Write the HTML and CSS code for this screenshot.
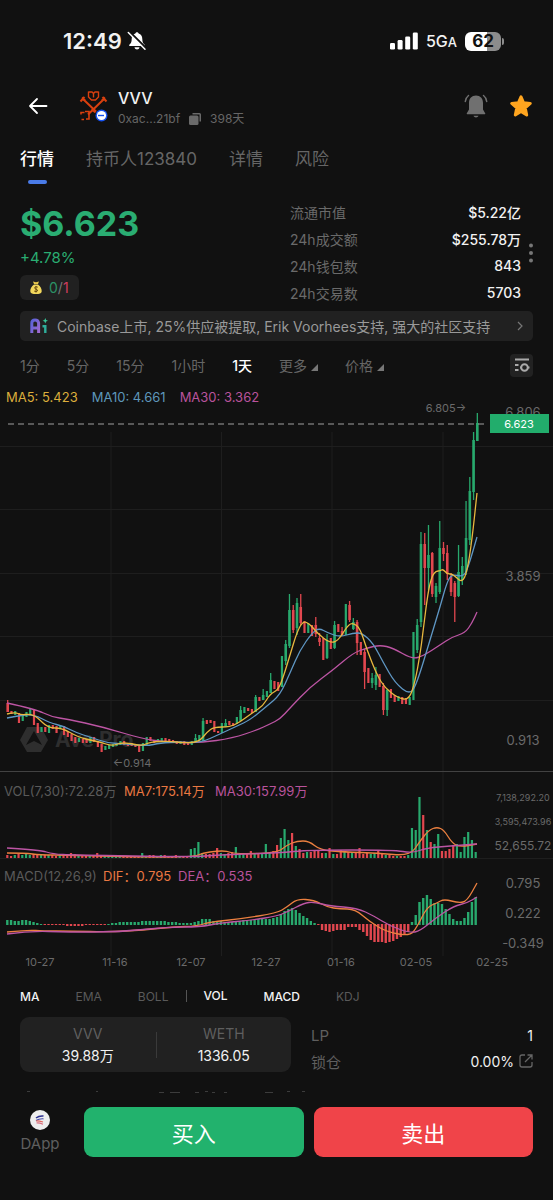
FILE: index.html
```html
<!DOCTYPE html>
<html lang="zh-CN">
  <head>
    <meta charset="UTF-8">
    <meta name="viewport" content="width=device-width, initial-scale=1.0">
    <title>VVV 行情</title>
    <link rel="stylesheet" href="styles.css">
  </head>
  <body>

    <!-- Status Bar -->
    <div class="status-bar">
      <div class="status-left">
        <span class="clock">12:49</span>
        <svg width="20" height="20" viewBox="0 0 20 20">
          <path d="M10 1.2c.9 0 1.5.6 1.6 1.3 2.5.7 3.7 2.8 3.7 5.4 0 3 .8 4.400 2.400 5.900.5.600.2 1.200-.5 1.200H2.800c-.7 0-1-.6-.5-1.200C3.900 12.300 4.700 10.900 4.700 7.900c0-2.600 1.200-4.700 3.700-5.400C8.500 1.800 9.100 1.200 10 1.200z" fill="#fff"/>
          <path d="M7.500 16.300h5c-.3 1.400-1.200 2.200-2.500 2.200s-2.200-.8-2.500-2.200z" fill="#fff"/>
          <path d="M2.500.800 19 17" stroke="#111" stroke-width="2.200"/>
          <path d="M1.300 1.500 18 18.300" stroke="#fff" stroke-width="1.500" stroke-linecap="round"/>
        </svg>
      </div>
      <div class="status-right">
        <svg width="28" height="18" viewBox="0 0 28 18" fill="#fff">
          <rect x="0" y="11" width="5" height="6.500" rx="1.300"/>
          <rect x="7.600" y="8" width="5" height="9.500" rx="1.300"/>
          <rect x="15.200" y="4.500" width="5" height="13" rx="1.300"/>
          <rect x="22.800" y="0.500" width="5" height="17" rx="1.300"/>
        </svg>
        <span class="network">5G<small>A</small></span>
        <span class="battery">62</span>
      </div>
    </div>

    <!-- Token Header -->
    <header class="header">
      <button class="icon-btn" aria-label="返回">
        <svg width="20" height="18" viewBox="0 0 20 18" fill="none" stroke="#fff" stroke-width="1.800" stroke-linecap="round" stroke-linejoin="round">
          <path d="M9 2 2 9l7 7M2 9h16.500"/>
        </svg>
      </button>
      <svg class="token-logo" width="30" height="32" viewBox="0 0 30 32" fill="none" stroke="#d9400f" stroke-width="1.800">
        <path d="M9.500 2H13l1.500 1.500L16 2h3.500M9.500 1.500V7l3 3h4l3-3V1.500M14.500 3.500V7.500" stroke-width="1.400"/>
        <path d="M4 9 17 21.500M25 9 9 24.500" stroke-width="2"/>
        <path d="M1.500 11.500 5.500 7M3 7.500l3 3M27.500 11.500 23.500 7M26 7.500l-3 3" stroke-width="2"/>
        <path d="M2 24.500v-2h3.500M6 21.500h4v7.500H7M2.500 29.500H5M12.500 19.500l4 3" stroke-width="1.600"/>
        <circle cx="22.500" cy="25.500" r="6" fill="#1652f0" stroke="none"/>
        <circle cx="22.500" cy="25.500" r="4.600" fill="#fff" stroke="none"/>
        <path d="M19 25.500h6" stroke="#1652f0" stroke-width="1.400"/>
      </svg>
      <div class="token-info">
        <h1>VVV</h1>
        <p>
          <span>0xac...21bf</span>
          <svg width="12" height="12" viewBox="0 0 12 12" fill="#6a6a6a"><path d="M3.500 0H10.500Q12 0 12 1.500V8.500H10.500V1.500H3.500z"/><rect x="0" y="2.500" width="9.500" height="9.500" rx="1.500"/></svg>
          <span>398天</span>
        </p>
      </div>
      <button class="icon-btn" aria-label="提醒">
        <svg width="24" height="24" viewBox="0 0 24 24" fill="#707070">
          <path d="M12 1.500C7.800 1.500 5 4.500 5 8.800V15.500L2.700 19.500Q2.500 20.300 3.300 20.300H20.700Q21.500 20.300 21.300 19.500L19 15.500V8.800C19 4.500 16.200 1.500 12 1.500z"/>
          <path d="M9.500 21.800h5c-.5 1.200-1.300 1.700-2.500 1.700s-2-.5-2.500-1.700z"/>
          <path d="M4.500 1.500Q1.800 3.500 1.300 7.500M19.500 1.500Q22.200 3.500 22.700 7.500" fill="none" stroke="#707070" stroke-width="1.500" stroke-linecap="round"/>
        </svg>
      </button>
      <button class="icon-btn" aria-label="收藏">
        <svg width="24" height="24" viewBox="0 0 24 24" fill="#ffa51f" stroke="#ffa51f" stroke-width="3" stroke-linejoin="round">
          <path d="M12 2.800 14.600 8.800 21.300 9.400 16.200 13.800 17.700 21 12 17.500 6.300 21 7.800 13.800 2.700 9.400 9.400 8.800z"/>
        </svg>
      </button>
    </header>

    <nav class="tabs">
      <a href="#" class="active">行情</a>
      <a href="#">持币人123840</a>
      <a href="#">详情</a>
      <a href="#">风险</a>
    </nav>

    <!-- Price Summary -->
    <section class="summary">
      <div class="price-box">
        <div class="price">$6.623</div>
        <div class="change">+4.78%</div>
        <div class="badge">
          <svg width="12" height="13" viewBox="0 0 12 13">
            <path d="M3 .5 6 1.300 9 .5 8 3H4z" fill="#e8c84c"/>
            <path d="M4 3.500h4C10.500 5.500 12 8 11.700 10.500 11.500 12.500 9.500 13 6 13S.5 12.500.3 10.500C0 8 1.500 5.500 4 3.500z" fill="#f2d75c"/>
            <path d="M7.800 6.200Q6 5.200 4.800 6.300 4.300 7.700 6 8.200 8 8.700 7.400 10 6 11.200 4.200 10.100M6 5v6.500" fill="none" stroke="#6b4d12" stroke-width="1"/>
          </svg>
          <span><b class="up">0</b>/<b class="down">1</b></span>
        </div>
      </div>
      <dl class="stats">
        <div><dt>流通市值</dt><dd>$5.22亿</dd></div>
        <div><dt>24h成交额</dt><dd>$255.78万</dd></div>
        <div><dt>24h钱包数</dt><dd>843</dd></div>
        <div><dt>24h交易数</dt><dd>5703</dd></div>
      </dl>
      <button class="icon-btn more-dots" aria-label="更多数据">
        <svg width="4" height="20" viewBox="0 0 4 20" fill="#777"><circle cx="2" cy="2.500" r="2"/><circle cx="2" cy="10" r="2"/><circle cx="2" cy="17.500" r="2"/></svg>
      </button>
    </section>

    <a href="#" class="ai-banner">
      <svg width="18" height="16" viewBox="0 0 18 16" fill="none">
        <defs>
          <linearGradient id="aiFill" x1="0" y1="0" x2="1" y2="1">
            <stop offset="0" stop-color="#5a63d8"/>
            <stop offset="1" stop-color="#a06ad0"/>
          </linearGradient>
        </defs>
        <path d="M1.800 15V5Q1.800 2 5 2T8.600 5V15M1.800 10H8.600" stroke="url(#aiFill)" stroke-width="3"/>
        <path d="M12.500 8.300H15.300V15" stroke="#2fae9b" stroke-width="2.400"/>
        <path d="M15.300 0Q15.500 2.500 18 2.700 15.500 3 15.300 5.400 15 3 12.600 2.700 15 2.500 15.300 0z" fill="#39c79a"/>
      </svg>
      <span>Coinbase上市, 25%供应被提取, Erik Voorhees支持, 强大的社区支持</span>
      <svg width="6" height="10" viewBox="0 0 6 10" fill="none" stroke="#777" stroke-width="1.200"><path d="M1 1l4 4-4 4"/></svg>
    </a>

    <!-- Time Range -->
    <div class="ranges">
      <button>1分</button>
      <button>5分</button>
      <button>15分</button>
      <button>1小时</button>
      <button class="active">1天</button>
      <button class="dropdown">更多</button>
      <button class="dropdown">价格</button>
      <button class="settings" aria-label="图表设置">
        <svg width="16" height="15" viewBox="0 0 16 15" fill="none" stroke="#aaa" stroke-width="2">
          <path d="M1 1.500h14M1 7h3.500M1 12h3.500"/>
          <circle cx="10.500" cy="9.500" r="3.300"/>
          <path d="M6 9.500h1M14 9.500h1.500"/>
        </svg>
      </button>
    </div>

    <!-- Chart -->
    <div class="legend">
      <span class="ma5">MA5: 5.423</span>
      <span class="ma10">MA10: 4.661</span>
      <span class="ma30">MA30: 3.362</span>
    </div>
    <svg class="chart" id="chart" viewBox="0 405 553 567">
      <g class="grid">
        <path d="M111 432V956M221.500 432V956M332 432V956M443 432V956"/>
        <path d="M0 446.500H553M0 509.500H553M0 573.500H553M0 636.500H553M0 700.500H553M0 858.500H553"/>
        <path class="divider" d="M0 771.500H553"/>
      </g>
      <g class="watermark">
        <path d="M27 727H41L48 740 41 752H27L20 740z"/>
        <path d="M34 731 42 745 34 741 26 745z" class="hole"/>
        <text x="55" y="747">Ave Pro</text>
      </g>
      <g id="bars"></g>
      <g id="lines"></g>
      <path class="last-price" d="M8 424H488"/>
      <g class="axis">
        <text x="523" y="417">6.806</text>
        <text x="523" y="581">3.859</text>
        <text x="523" y="745">0.913</text>
        <text x="523" y="801" class="tiny">7,138,292.20</text>
        <text x="523" y="825" class="tiny">3,595,473.96</text>
        <text x="523" y="850" class="small">52,655.72</text>
        <text x="523" y="888">0.795</text>
        <text x="523" y="918">0.222</text>
        <text x="523" y="948">-0.349</text>
        <text x="40" y="966" class="date">10-27</text>
        <text x="115" y="966" class="date">11-16</text>
        <text x="191" y="966" class="date">12-07</text>
        <text x="266" y="966" class="date">12-27</text>
        <text x="341" y="966" class="date">01-16</text>
        <text x="416" y="966" class="date">02-05</text>
        <text x="492" y="966" class="date">02-25</text>
        <text x="446" y="412" class="date">6.805→</text>
        <text x="132" y="767" class="date">←0.914</text>
      </g>
      <rect class="tag" x="490" y="414" width="59" height="19"/>
      <text class="tag-text" x="519" y="428">6.623</text>
      <g class="panel-legend">
        <text x="4" y="796">VOL(7,30):72.28万</text>
        <text x="124" y="796" class="orange">MA7:175.14万</text>
        <text x="215" y="796" class="pink">MA30:157.99万</text>
        <text x="4" y="881">MACD(12,26,9)</text>
        <text x="103" y="881" class="orange">DIF：0.795</text>
        <text x="178" y="881" class="pink">DEA：0.535</text>
      </g>
    </svg>

    <!-- Indicators -->
    <div class="indicators">
      <button class="active">MA</button>
      <button>EMA</button>
      <button>BOLL</button>
      <button class="active split">VOL</button>
      <button class="active">MACD</button>
      <button>KDJ</button>
    </div>

    <!-- Pool -->
    <section class="pool">
      <div class="pool-card">
        <div><span>VVV</span><strong>39.88万</strong></div>
        <div><span>WETH</span><strong>1336.05</strong></div>
      </div>
      <dl class="pool-info">
        <div><dt>LP</dt><dd>1</dd></div>
        <div>
          <dt>锁仓</dt>
          <dd>0.00%
            <svg width="14" height="14" viewBox="0 0 14 14" fill="none" stroke="#666" stroke-width="1.300"><path d="M6 1H3Q1 1 1 3V11Q1 13 3 13H11Q13 13 13 11V8M8.500 1H13V5.500M13 1 6 8"/></svg>
          </dd>
        </div>
      </dl>
    </section>

    <svg class="list-edge" width="320" height="2" viewBox="0 0 320 2" fill="#3c3c3c">
      <path d="M27 0h3v1h-3zM96 0h2v1h-2zM159 1h5v1h-5zM170 1h10v1h-10zM195 1h4v1h-4zM205 0h3v1h-3zM212 1h3v1h-3zM224 1h3v1h-3zM265 1h8v1h-8zM287 0h3v1h-3zM302 0h3v1h-3z"/>
    </svg>

    <!-- Bottom Actions -->
    <footer class="actions">
      <a href="#" class="dapp">
        <svg width="20" height="20" viewBox="0 0 20 20" fill="none">
          <circle cx="10" cy="10" r="10" fill="#eee"/>
          <path d="M6 8Q9 5.500 13.500 6" stroke="#2b2f8f" stroke-width="1.500"/>
          <path d="M6 10.500Q9 8.500 13.500 8.800" stroke="#4549a8" stroke-width="1.200"/>
          <path d="M6 11Q8 10.500 13 12" stroke="#e0655f" stroke-width="1.200"/>
          <path d="M6.500 13Q9 12.500 13 14.300" stroke="#d96f80" stroke-width="1.100"/>
        </svg>
        <span>DApp</span>
      </a>
      <button class="buy">买入</button>
      <button class="sell">卖出</button>
    </footer>

    <script src="chart.js"></script>
  </body>
</html>
```
FILE: styles.css
```css
* {
  box-sizing: border-box;
}
body {
  font-family: 'Inter', 'Noto Sans CJK SC', sans-serif;
  margin: 0;
  background-color: #111;
  color: #f2f2f2;
}
button {
  background: none;
  border: none;
  padding: 0;
  color: inherit;
  font-family: inherit;
  cursor: pointer;
}
a {
  color: inherit;
  text-decoration: none;
}
svg {
  display: block;
  flex: none;
}
h1, p, dl, dd {
  margin: 0;
}

/* Status bar */
.status-bar {
  display: flex;
  justify-content: space-between;
  align-items: center;
  height: 82px;
  padding: 0 49px 0 63px;
}
.status-left {
  display: flex;
  align-items: center;
  gap: 5px;
}
.clock {
  font-size: 22px;
  font-weight: 600;
}
.status-right {
  display: flex;
  align-items: center;
  gap: 8px;
}
.network {
  font-size: 16px;
  font-weight: 500;
}
.network small {
  font-size: 13px;
}
.battery {
  position: relative;
  width: 36px;
  height: 19px;
  margin-right: 3px;
  border-radius: 6px;
  background: linear-gradient(to right, #fff 62%, #8c8c8c 62%);
  color: #111;
  font-size: 17px;
  font-weight: 700;
  line-height: 19px;
  text-align: center;
}
.battery::after {
  content: '';
  position: absolute;
  right: -3px;
  top: 6px;
  width: 2px;
  height: 7px;
  border-radius: 0 2px 2px 0;
  background-color: #8c8c8c;
}

/* Header */
.header {
  display: flex;
  align-items: center;
  height: 48px;
  padding: 0 20px 0 28px;
  gap: 21px;
}
.token-logo {
  margin-left: 10px;
}
.token-info {
  flex: 1;
  margin-left: -12px;
  padding-top: 3px;
}
.token-info h1 {
  font-size: 16px;
  font-weight: 500;
  line-height: 22px;
}
.token-info p {
  display: flex;
  align-items: center;
  gap: 9px;
  font-size: 12px;
  line-height: 20px;
  color: #666;
}
.tabs {
  display: flex;
  gap: 32px;
  padding: 16px 20px 0;
  font-size: 17px;
  line-height: 26px;
  color: #666;
}
.tabs a {
  padding-bottom: 12px;
}
.tabs .active {
  position: relative;
  color: #fff;
  font-weight: 500;
}
.tabs .active::after {
  content: '';
  position: absolute;
  left: 8px;
  bottom: 0;
  width: 19px;
  height: 4px;
  border-radius: 2px;
  background-color: #4a7be8;
}

/* Summary */
.summary {
  position: relative;
  display: flex;
  padding: 14px 32px 0 20px;
}
.price-box {
  flex: 1;
}
.price {
  font-size: 34px;
  font-weight: 700;
  line-height: 52px;
  color: #2aad72;
}
.change {
  font-size: 15px;
  line-height: 16px;
  color: #2aad72;
  margin-bottom: 9px;
}
.badge {
  display: inline-flex;
  align-items: center;
  gap: 7px;
  height: 25px;
  padding: 0 10px;
  border-radius: 6px;
  background-color: #212121;
  font-size: 14px;
  color: #777;
}
.badge b {
  font-weight: 400;
}
.up {
  color: #2b9166;
}
.down {
  color: #d23d5c;
}
.stats {
  width: 231px;
  font-size: 14px;
}
.stats div, .pool-info div {
  display: flex;
  justify-content: space-between;
  align-items: center;
}
.stats div {
  height: 27px;
}
.stats dt {
  color: #6a6a6a;
}
.stats dd {
  font-weight: 500;
}
.more-dots {
  position: absolute;
  right: 20px;
  top: 59px;
}
.ai-banner {
  display: flex;
  align-items: center;
  height: 30px;
  margin: 5px 20px 0;
  padding: 0 10px;
  gap: 9px;
  border-radius: 5px;
  background-color: #212121;
  font-size: 14px;
  color: #999;
}
.ai-banner span {
  flex: 1;
  white-space: nowrap;
}

/* Time ranges */
.ranges {
  display: flex;
  align-items: center;
  height: 48px;
  padding: 0 20px;
  gap: 27px;
  color: #666;
}
.ranges button {
  font-size: 14px;
}
.ranges .active {
  color: #fff;
  font-weight: 500;
}
.dropdown::after {
  content: '';
  display: inline-block;
  margin-left: 4px;
  border-left: 7px solid transparent;
  border-bottom: 7px solid #777;
}
.ranges .settings {
  display: flex;
  align-items: center;
  justify-content: center;
  width: 23px;
  height: 23px;
  margin-left: auto;
  border-radius: 4px;
  background-color: #222;
}

/* Chart */
.legend {
  display: flex;
  gap: 14px;
  padding: 0 6px;
  font-size: 13px;
  line-height: 16px;
}
.ma5 {
  color: #dcae3c;
}
.ma10 {
  color: #5e97ba;
}
.ma30 {
  color: #b9539c;
}
.chart {
  width: 100%;
  height: auto;
  overflow: visible;
}
.grid path {
  fill: none;
  stroke: #1e1e1e;
}
.grid .divider {
  stroke: #424242;
}
.watermark {
  fill: #2e2e2e;
  font-size: 21px;
  font-weight: 700;
}
.watermark .hole {
  fill: #111;
}
.last-price {
  stroke: #a0a0a0;
  stroke-width: 1.2;
  stroke-dasharray: 6 4;
}
.axis {
  fill: #6a6a6a;
  font-size: 13px;
  text-anchor: middle;
}
.axis .tiny {
  font-size: 9px;
}
.axis .small {
  font-size: 12px;
}
.axis .date {
  font-size: 11px;
}
.tag {
  fill: #22ad6c;
}
.tag-text {
  fill: #fff;
  font-size: 11px;
  text-anchor: middle;
}
.panel-legend {
  fill: #5a5a5a;
  font-size: 13px;
}
.panel-legend .orange {
  fill: #ea7842;
}
.panel-legend .pink {
  fill: #b9539c;
}
.bar-up {
  fill: #28a96d;
}
.bar-down {
  fill: #e2474f;
}
.line {
  fill: none;
  stroke-width: 1.3;
  stroke-linejoin: round;
}
.line-yellow {
  stroke: #e8b83f;
}
.line-blue {
  stroke: #5f97c4;
}
.line-pink {
  stroke: #bd55a4;
}
.line-orange {
  stroke: #ec8040;
}

/* Indicators */
.indicators {
  display: flex;
  align-items: center;
  gap: 36px;
  height: 45px;
  padding: 3px 20px 0;
  color: #5a5a5a;
}
.indicators button {
  font-size: 12px;
}
.indicators .active {
  color: #f2f2f2;
  font-weight: 500;
}
.indicators .split {
  margin-left: -18px;
  padding-left: 16px;
  border-left: 1px solid #555;
  line-height: 12px;
}

/* Pool */
.pool {
  display: grid;
  grid-template-columns: 271fr 222fr;
  gap: 20px;
  padding: 0 20px;
}
.pool-card {
  display: grid;
  grid-template-columns: 1fr 1fr;
  align-items: center;
  height: 55px;
  border-radius: 9px;
  background-color: #212121;
  text-align: center;
}
.pool-card div + div {
  border-left: 1px solid #3a3a3a;
  height: 26px;
  display: flex;
  flex-direction: column;
  justify-content: center;
}
.pool-card span, .pool-card strong {
  display: block;
  font-size: 14px;
  line-height: 22px;
  font-weight: 400;
}
.pool-card span {
  color: #5f5f5f;
}
.pool-info {
  padding-top: 5px;
  font-size: 14px;
}
.pool-info div {
  height: 26px;
}
.pool-info dt {
  color: #5f5f5f;
  font-size: 15px;
}
.pool-info dd {
  display: flex;
  align-items: center;
  gap: 5px;
}
.list-edge {
  margin-top: 17px;
}

/* Bottom actions */
.actions {
  display: flex;
  align-items: center;
  gap: 10px;
  padding: 14px 20px 42px;
}
.dapp {
  display: flex;
  flex-direction: column;
  align-items: center;
  gap: 4px;
  width: 40px;
  margin-right: 14px;
  font-size: 15px;
  line-height: 20px;
  color: #5f5f5f;
}
.buy, .sell {
  flex: 1;
  height: 50px;
  border-radius: 9px;
  font-size: 22px;
  color: #fff;
}
.buy {
  background-color: #22b26d;
}
.sell {
  background-color: #f04449;
}
```
FILE: chart.js
```js
// Candles: [direction, high, bodyTop, bodyBottom, low], or [direction, top, bottom] when there is no wick
const candles = [
  ['d', 700, 703, 712, 712], ['d', 711, 714], ['u', 711, 715], ['d', 713, 723], ['u', 715, 721], ['u', 712, 717],
  ['u', 709, 714], ['d', 709, 725], ['d', 723, 733], ['u', 727, 732], ['d', 727, 732], ['u', 725, 733],
  ['d', 725, 729], ['d', 726, 733], ['u', 725, 729], ['d', 726, 735], ['d', 731, 737], ['d', 734, 741],
  ['d', 737, 743], ['u', 738, 742], ['d', 739, 743], ['d', 739, 743], ['u', 737, 743], ['d', 737, 742],
  ['d', 741, 747], ['d', 744, 752], ['u', 746, 750], ['u', 745, 749], ['u', 744, 747], ['u', 743, 746],
  ['u', 741, 745], ['d', 741, 745], ['d', 743, 746], ['d', 743, 746], ['d', 744, 747], ['d', 745, 752],
  ['u', 743, 751], ['u', 737, 746], ['d', 737, 741], ['d', 740, 743], ['u', 739, 742], ['u', 738, 741],
  ['d', 738, 741], ['d', 739, 743], ['d', 740, 743], ['d', 741, 744], ['u', 741, 744], ['d', 741, 745],
  ['d', 742, 745], ['u', 741, 745], ['u', 734, 738, 743, 743], ['u', 735, 742], ['u', 718, 721, 741, 741], ['d', 720, 724],
  ['d', 720, 723], ['d', 721, 732], ['d', 731, 733], ['u', 723, 733], ['u', 719, 723, 727, 727], ['d', 721, 725],
  ['d', 723, 726], ['u', 717, 724], ['u', 706, 710, 721, 721], ['u', 707, 713], ['d', 708, 711], ['d', 709, 713],
  ['u', 695, 697, 712, 712], ['d', 697, 701], ['u', 689, 695, 700, 700], ['u', 691, 697], ['u', 673, 680, 693, 693], ['d', 681, 689],
  ['d', 682, 691], ['u', 656, 687], ['u', 640, 644, 661, 665], ['u', 594, 610, 646, 648], ['d', 605, 610, 630, 633], ['u', 598, 603, 628, 635],
  ['d', 594, 607, 623, 625], ['d', 621, 633], ['u', 623, 633], ['d', 625, 636], ['d', 617, 625, 634, 637], ['d', 633, 638, 642, 646],
  ['d', 638, 660], ['u', 634, 640, 658, 659], ['d', 638, 649], ['u', 621, 625, 648, 649], ['d', 624, 632], ['d', 627, 631, 635, 636],
  ['u', 604, 635], ['d', 601, 605, 620, 622], ['u', 618, 622, 629, 630], ['d', 620, 622, 643, 655], ['d', 642, 655], ['d', 649, 652, 672, 689],
  ['d', 668, 683], ['u', 673, 678, 683, 688], ['u', 667, 675, 685, 690], ['d', 674, 687], ['d', 683, 686, 710, 715], ['u', 689, 690, 710, 716],
  ['d', 689, 698], ['d', 695, 702], ['u', 696, 701], ['d', 697, 704], ['d', 698, 704], ['u', 697, 705],
  ['u', 632, 700], ['u', 619, 625, 650, 653], ['u', 532, 544, 622, 627], ['d', 533, 544, 568, 605], ['u', 525, 555, 568, 590], ['d', 552, 553, 594, 597],
  ['u', 583, 586, 597, 603], ['u', 521, 548, 592, 594], ['d', 542, 548, 554, 561], ['d', 545, 553, 574, 580], ['d', 573, 577, 592, 596], ['d', 581, 583, 597, 622],
  ['u', 545, 572, 596, 597], ['u', 557, 566, 580, 585], ['u', 501, 538, 572, 575], ['u', 477, 491, 540, 545], ['u', 432, 440, 492, 500], ['u', 413, 423, 441, 441]
];

// Bar heights under the candles, one per day
const volumes = [
  3, 2, 3, 4, 3, 4, 3, 4, 3, 3, 3, 3, 3, 2, 3, 3, 3, 5, 4, 3, 3, 3, 3, 3, 5, 3, 3, 3, 2, 2, 2,
  2, 2, 2, 2, 2, 5, 2, 3, 3, 2, 3, 3, 2, 2, 3, 2, 2, 2, 9, 10, 16, 5, 4, 4, 5, 10, 5, 4, 5,
  6, 11, 4, 4, 4, 7, 4, 5, 4, 14, 6, 7, 13, 20, 29, 18, 25, 12, 9, 5, 6, 6, 7, 7, 5, 5, 10, 4,
  4, 8, 6, 6, 5, 5, 10, 4, 5, 4, 5, 8, 4, 3, 3, 2, 2, 2, 2, 3, 30, 28, 61, 43, 28, 16, 14,
  24, 7, 7, 9, 13, 14, 6, 21, 26, 18, 6
];

const macd = [
  5, 5, 4, 4, 5, 5, 4, 3, 2, 1, -1, -1, -1, -1, -1, -1, -2, -2, -2, -2, -2, -1, -1, -1, -1, -1, -1, 1,
  2, 2, 3, 3, 3, 3, 3, 3, 4, 4, 4, 4, 4, 4, 4, 3, 3, 3, 2, 2, 2, 2, 3, 4, 6, 6, 6, 4, 4, 4, 3, 3,
  3, 4, 4, 5, 5, 5, 5, 6, 6, 6, 6, 7, 8, 11, 14, 16, 17, 15, 12, 9, 7, 4, 2, -1, -6, -7, -8, -7, -6, -6,
  -6, -3, -3, -3, -6, -8, -12, -16, -18, -18, -18, -19, -18, -17, -15, -13, -11, -8, 3, 10, 23, 27,
  30, 26, 22, 22, 21, 16, 11, 6, 4, 4, 7, 13, 23, 28
];

const lines = [
  ['pink', '7,703 35,709 52,717 67,719 103,727 143,739 167,742 200,743 233,738 257,730 270,724 280,719 290,708 310,687 333,670 353,653 367,648 380,645 393,648 412,659 423,656 440,645 452,637 465,633 472,623 477,612'],
  ['blue', '7,718 17,716 33,714 50,723 63,726 77,733 90,737 107,743 127,744 147,746 160,743 180,742 200,743 220,734 237,726 250,720 267,706 280,695 290,673 300,650 312,633 319,628 328,633 340,637 353,633 362,633 373,643 383,662 395,683 410,695 417,683 430,640 440,607 447,582 452,574 463,577 468,568 477,537'],
  ['yellow', '7,714 15,712 21,715 30,714 37,717 48,728 62,728 78,737 90,740 100,742 112,746 120,743 128,743 142,746 150,742 170,741 183,743 199,742 207,732 214,727 230,727 240,722 252,713 263,706 270,694 278,690 283,678 290,655 297,632 303,621 310,624 318,634 330,643 338,641 348,625 353,623 360,628 367,650 377,675 385,688 398,698 409,700 415,682 420,655 423,632 428,592 432,576 436,571 440,571 443,569 447,574 453,574 462,583 467,572 472,540 477,493'],
  ['orange', '7,853 25,853 40,855 67,855 133,857 193,857 203,853 217,851 227,851 235,854 277,853 287,845 297,841 309,841 320,850 344,852 377,853 410,856 420,841 429,830 437,827 444,830 452,843 460,847 477,844'],
  ['pink', '7,848 40,850 53,854 73,855 193,857 217,855 277,853 310,850 394,850 412,853 427,848 450,846 477,844'],
  ['orange', '7,932 28,930 43,931 70,931 110,932 143,930 173,927 197,926 210,922 240,919 277,913 287,907 297,899 314,900 327,907 340,909 355,909 370,922 387,932 410,936 417,927 427,907 437,903 444,899 459,903 467,901 477,883'],
  ['pink', '7,934 27,931 70,932 120,932 167,927 200,927 220,923 253,920 277,916 287,912 304,903 314,902 330,906 357,908 374,916 390,926 410,933 420,931 437,917 454,906 467,903 477,897']
];

const svgNS = 'http://www.w3.org/2000/svg';
const bars = document.getElementById('bars');
const lineGroup = document.getElementById('lines');

function addBar(x, top, bottom, width, up) {
  const rect = document.createElementNS(svgNS, 'rect');
  rect.setAttribute('x', x - width / 2);
  rect.setAttribute('y', top);
  rect.setAttribute('width', width);
  rect.setAttribute('height', Math.max(bottom - top, 1));
  rect.setAttribute('class', up ? 'bar-up' : 'bar-down');
  bars.appendChild(rect);
}

// Curve through the midpoints so the averages look smooth
function smoothPath(text) {
  const pts = text.split(' ').map(p => p.split(',').map(Number));
  let d = `M${pts[0]}`;
  for (let i = 1; i < pts.length - 1; i++) {
    const midX = (pts[i][0] + pts[i + 1][0]) / 2;
    const midY = (pts[i][1] + pts[i + 1][1]) / 2;
    d += `Q${pts[i]} ${midX},${midY}`;
  }
  return d + `L${pts[pts.length - 1]}`;
}

candles.forEach((c, i) => {
  const x = 7.7 + i * 3.757;
  const up = c[0] === 'u';
  if (c.length === 3) {
    addBar(x, c[1], c[2], 2.2, up);
  } else {
    addBar(x, c[1], c[4], 1.3, up);
    addBar(x, c[2], c[3], 2.6, up);
  }
});

volumes.forEach((v, i) => {
  addBar(7.3 + i * 3.747, 858 - v, 858, 2.2, candles[i][0] === 'u');
});

macd.forEach((m, i) => {
  const x = 7.3 + i * 3.747;
  if (m > 0) {
    addBar(x, 925 - m, 925, 2.4, true);
  } else {
    addBar(x, 924, 924 - m, 2.4, false);
  }
});

lines.forEach(([color, points]) => {
  const path = document.createElementNS(svgNS, 'path');
  path.setAttribute('d', smoothPath(points));
  path.setAttribute('class', `line line-${color}`);
  lineGroup.appendChild(path);
});
```
